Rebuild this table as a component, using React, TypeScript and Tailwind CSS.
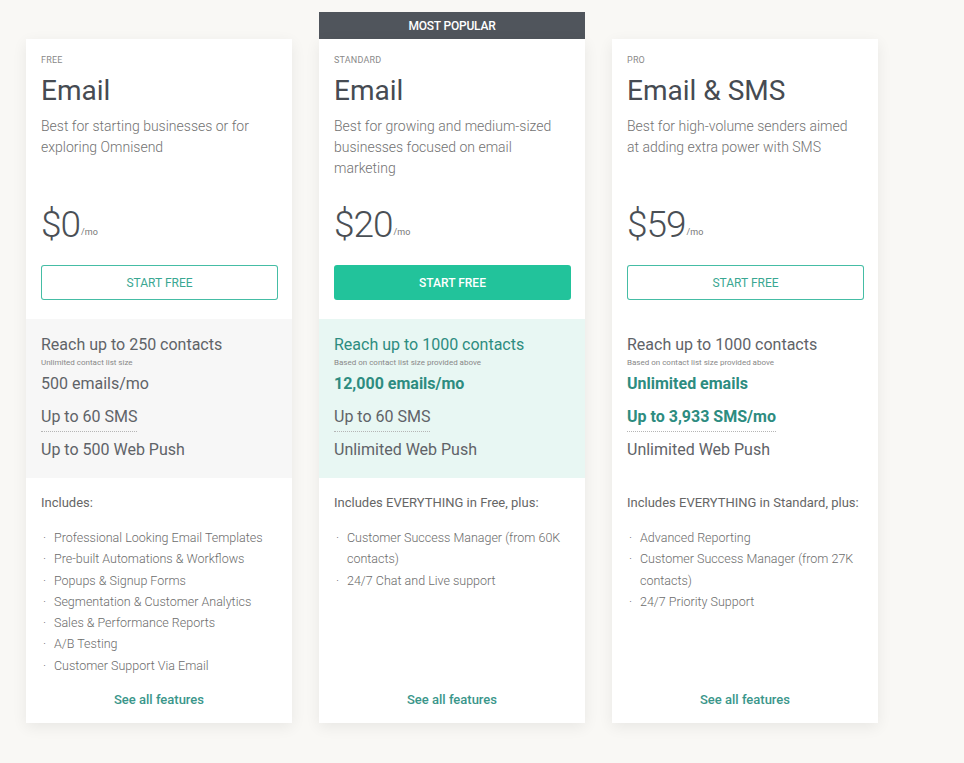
type Row = { text: string; teal?: boolean; bold?: boolean };

type Plan = {
  tier: string;
  name: string;
  desc: string;
  price: string;
  primary?: boolean;
  popular?: boolean;
  sectionBg: string;
  reach: string;
  reachTeal?: boolean;
  reachNote: string;
  emails: Row;
  sms: Row;
  push: string;
  includes: string;
  features: string[];
};

const plans: Plan[] = [
  {
    tier: "FREE",
    name: "Email",
    desc: "Best for starting businesses or for exploring Omnisend",
    price: "$0",
    sectionBg: "bg-[#f7f7f7]",
    reach: "Reach up to 250 contacts",
    reachNote: "Unlimited contact list size",
    emails: { text: "500 emails/mo" },
    sms: { text: "Up to 60 SMS" },
    push: "Up to 500 Web Push",
    includes: "Includes:",
    features: [
      "Professional Looking Email Templates",
      "Pre-built Automations & Workflows",
      "Popups & Signup Forms",
      "Segmentation & Customer Analytics",
      "Sales & Performance Reports",
      "A/B Testing",
      "Customer Support Via Email",
    ],
  },
  {
    tier: "STANDARD",
    name: "Email",
    desc: "Best for growing and medium-sized businesses focused on email marketing",
    price: "$20",
    primary: true,
    popular: true,
    sectionBg: "bg-[#e8f7f3]",
    reach: "Reach up to 1000 contacts",
    reachTeal: true,
    reachNote: "Based on contact list size provided above",
    emails: { text: "12,000 emails/mo", teal: true, bold: true },
    sms: { text: "Up to 60 SMS" },
    push: "Unlimited Web Push",
    includes: "Includes EVERYTHING in Free, plus:",
    features: ["Customer Success Manager (from 60K contacts)", "24/7 Chat and Live support"],
  },
  {
    tier: "PRO",
    name: "Email & SMS",
    desc: "Best for high-volume senders aimed at adding extra power with SMS",
    price: "$59",
    sectionBg: "bg-white",
    reach: "Reach up to 1000 contacts",
    reachNote: "Based on contact list size provided above",
    emails: { text: "Unlimited emails", teal: true, bold: true },
    sms: { text: "Up to 3,933 SMS/mo", teal: true, bold: true },
    push: "Unlimited Web Push",
    includes: "Includes EVERYTHING in Standard, plus:",
    features: [
      "Advanced Reporting",
      "Customer Success Manager (from 27K contacts)",
      "24/7 Priority Support",
    ],
  },
];

const rowCls = (r: Row) =>
  r.teal
    ? r.bold
      ? "text-[#2d8c80] font-bold"
      : "text-[#2d8c80]"
    : "text-[#5f6368]";

const PlanCard = ({ plan }: { plan: Plan }) => {
  return (
    <div className="w-[266px] flex flex-col">
      {plan.popular ? (
        <div className="h-[27px] bg-[#50555c] text-white text-[12px] font-medium flex items-center justify-center tracking-[-0.2px]">
          MOST POPULAR
        </div>
      ) : (
        <div className="h-[27px]"></div>
      )}
      <div className="flex-1 bg-white shadow-[0_4px_14px_rgba(0,0,0,0.07)] flex flex-col">
        <div className="px-[15px] pt-[15px]">
          <div className="text-[9px] leading-[12px] text-[#8a8a8a] tracking-[0.2px]">
            {plan.tier}
          </div>
          <div className="mt-[8px] text-[28px] leading-[34px] text-[#464b52]">
            {plan.name}
          </div>
          <div className="mt-[8px] h-[63px] text-[14px] leading-[21px] text-[#727272] font-light pr-[10px]">
            {plan.desc}
          </div>
          <div className="mt-[24px] flex items-end h-[44px]">
            <span className="text-[37px] leading-[44px] font-light text-[#4a4f55] tracking-[-1px]">
              {plan.price}
            </span>
            <span className="text-[9px] text-[#777] mb-[8px] ml-[1px]">/mo</span>
          </div>
          {plan.primary ? (
            <div className="mt-[18px] w-[237px] h-[35px] rounded-[3px] bg-[#22c39b] text-white text-[12px] font-medium flex items-center justify-center">
              START FREE
            </div>
          ) : (
            <div className="mt-[18px] w-[237px] h-[35px] rounded-[3px] ring-1 ring-inset ring-[#45bda5] text-[#3aa792] text-[12px] flex items-center justify-center">
              START FREE
            </div>
          )}
        </div>
        <div className={`mt-[19px] px-[15px] pt-[16px] pb-[18px] ${plan.sectionBg}`}>
          <div
            className={`text-[16px] leading-[20px] ${
              plan.reachTeal ? "text-[#2d8c80]" : "text-[#5f6368]"
            }`}
          >
            {plan.reach}
          </div>
          <div className="mt-[3px] text-[8px] leading-[10px] text-[#888]">{plan.reachNote}</div>
          <div className={`mt-[6px] text-[16px] leading-[20px] ${rowCls(plan.emails)}`}>
            {plan.emails.text}
          </div>
          <div className="mt-[11px]">
            <span
              className={`inline-block text-[16px] leading-[20px] pb-[4px] border-b border-dotted border-[#b5b5b5] ${rowCls(
                plan.sms
              )}`}
            >
              {plan.sms.text}
            </span>
          </div>
          <div className="mt-[8px] text-[16px] leading-[20px] text-[#5f6368]">{plan.push}</div>
        </div>
        <div className="px-[15px] pt-[16px] pb-[14px] flex-1 flex flex-col">
          <div className="text-[13px] leading-[18px] text-[#666]">{plan.includes}</div>
          <ul className="mt-[15px]">
            {plan.features.map((f) => (
              <li key={f} className="flex text-[12.5px] leading-[21.3px] text-[#6c6c6c] font-light">
                <span className="w-[13px] shrink-0 pl-[2px]">·</span>
                <span>{f}</span>
              </li>
            ))}
          </ul>
          <div className="mt-auto text-center text-[13px] leading-[18px] font-medium text-[#3a968a]">
            See all features
          </div>
        </div>
      </div>
    </div>
  );
};

export default function App() {
  return (
    <div
      className="w-[964px] h-[763px] bg-[#f9f8f5] pt-[12px] pl-[26px] pb-[40px] flex gap-[27px] overflow-hidden"
      style={{ fontFamily: "Roboto, 'Liberation Sans', sans-serif" }}
    >
      {plans.map((p) => (
        <PlanCard key={p.tier} plan={p} />
      ))}
    </div>
  );
}
